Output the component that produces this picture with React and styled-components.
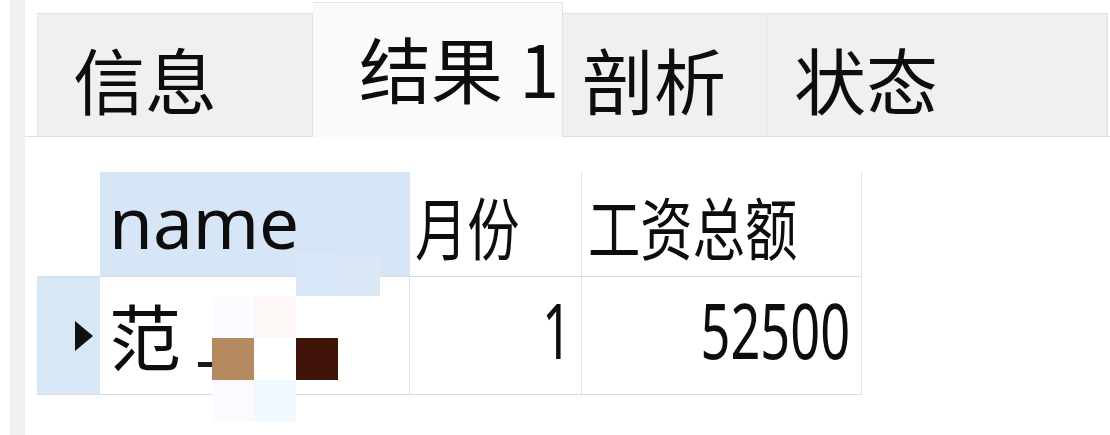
import React from "react";
import styled, { createGlobalStyle } from "styled-components";

const GlobalStyle = createGlobalStyle`
    html, body {
        margin: 0;
        padding: 0;
        background: #ffffff;
    }
    body {
        font-family: "Noto Sans", "Noto Sans CJK SC", sans-serif;
        color: #0d0d0d;
    }
`;

const Page = styled.div`
    display: flex;
    width: 1110px;
    height: 435px;
    overflow: hidden;
    background: #ffffff;
`;

const SideStrip = styled.div`
    flex-shrink: 0;
    width: 15px;
    margin-left: 10px;
    background: #f0f0f0;
`;

const Main = styled.div`
    flex: 1;
    min-width: 0;
    display: flex;
    flex-direction: column;
`;

const TabBar = styled.div`
    display: flex;
    align-items: flex-end;
    height: 137px;
    box-sizing: border-box;
    padding-left: 12px;
    border-bottom: 1px solid #dedede;
`;

const Tab = styled.div`
    position: relative;
    flex-shrink: 0;
    box-sizing: border-box;
    width: ${(p) => p.$width}px;
    height: ${(p) => (p.$active ? 135 : 123)}px;
    margin-bottom: ${(p) => (p.$active ? -1 : 0)}px;
    padding-left: ${(p) => p.$pad}px;
    padding-top: 28px;
    background: ${(p) => (p.$active ? "#fafafa" : "#f0f0f0")};
    border-top: 1px solid #e3e3e3;
    border-right: 1px solid #e3e3e3;
    border-left: ${(p) => (p.$first ? "1px solid #e3e3e3" : "none")};
    z-index: ${(p) => (p.$active ? 1 : 0)};
    font-family: "Noto Sans CJK SC", "Noto Sans", sans-serif;
    font-size: 72px;
    line-height: 1;
    white-space: nowrap;
`;

const Content = styled.div`
    flex: 1;
    padding: 35px 0 0 12px;
`;

const Grid = styled.div`
    position: relative;
    display: grid;
    grid-template-columns: 63px 310px 172px 280px;
    grid-template-rows: 105px 118px;
`;

const Cell = styled.div`
    display: flex;
    box-sizing: border-box;
    align-items: flex-end;
    justify-content: ${(p) => (p.$right ? "flex-end" : "flex-start")};
    padding: ${(p) => p.$pad};
    background: ${(p) => p.$bg || "#ffffff"};
    border-right: 1px solid #e2e2e2;
    border-bottom: 1px solid #dcdcdc;
    overflow: hidden;
`;

const Corner = styled.div`
    box-sizing: border-box;
    border-bottom: 1px solid #dcdcdc;
`;

const Indicator = styled.div`
    display: flex;
    align-items: center;
    justify-content: flex-end;
    box-sizing: border-box;
    padding-right: 7px;
    background: #d7e7f6;
    border-bottom: 1px solid #dcdcdc;
`;

const Arrow = styled.div`
    width: 0;
    height: 0;
    border-left: 18px solid #111111;
    border-top: 15px solid transparent;
    border-bottom: 15px solid transparent;
`;

const LatinText = styled.span`
    font-family: "Noto Sans", sans-serif;
    font-size: 71px;
    line-height: 1;
    white-space: nowrap;
`;

const HanText = styled.span`
    display: inline-block;
    font-family: "Noto Sans CJK SC", sans-serif;
    font-size: ${(p) => p.$size || 68}px;
    line-height: 1;
    white-space: nowrap;
    transform: scaleX(${(p) => p.$scale || 1});
    transform-origin: left bottom;
`;

const Digits = styled.span`
    display: inline-block;
    font-family: "Noto Sans", sans-serif;
    font-size: 77px;
    line-height: 1;
    white-space: nowrap;
    transform: scaleX(0.68);
    transform-origin: right bottom;
`;

const Mosaic = styled.div`
    position: absolute;
    left: 175px;
    top: 82px;
    display: grid;
    grid-template-columns: repeat(4, 42px);
    grid-template-rows: repeat(4, 42px);
    pointer-events: none;
`;

const Block = styled.div`
    background: ${(p) => p.$color || "transparent"};
`;

const Stroke = styled.div`
    position: absolute;
    left: 161px;
    top: 190px;
    width: 14px;
    height: 5px;
    background: #1a1a1a;
`;

const tabs = [
    { label: "信息", width: 276, pad: 35 },
    { label: "结果 1", width: 250, pad: 46, active: true },
    { label: "剖析", width: 204, pad: 19 },
    { label: "状态", width: 341, pad: 27 },
];

const mosaic = [
    [null, null, "#d9e9f9", "#dae8f6"],
    ["#fbfcff", "#fdf7f5", null, null],
    ["#b68a61", "#ffffff", "#401309", null],
    ["#fcfaff", "#f1faff", null, null],
];

const App = () => {
    return (
        <Page>
            <GlobalStyle />
            <SideStrip />
            <Main>
                <TabBar>
                    {tabs.map((t, i) => (
                        <Tab
                            key={t.label}
                            $width={t.width}
                            $pad={t.pad}
                            $active={t.active}
                            $first={i === 0}
                        >
                            {t.label}
                        </Tab>
                    ))}
                </TabBar>
                <Content>
                    <Grid>
                        <Corner />
                        <Cell $bg="#d6e6f6" $pad="0 0 19px 9px">
                            <LatinText>name</LatinText>
                        </Cell>
                        <Cell $pad="0 0 16px 5px">
                            <HanText $scale={0.77}>月份</HanText>
                        </Cell>
                        <Cell $pad="0 0 16px 6px">
                            <HanText $scale={0.77}>工资总额</HanText>
                        </Cell>

                        <Indicator>
                            <Arrow />
                        </Indicator>
                        <Cell $pad="0 0 24px 9px">
                            <HanText $size={72}>范</HanText>
                        </Cell>
                        <Cell $right $pad="0 9px 26px 0">
                            <Digits>1</Digits>
                        </Cell>
                        <Cell $right $pad="0 11px 26px 0">
                            <Digits>52500</Digits>
                        </Cell>

                        <Stroke />
                        <Mosaic>
                            {mosaic.flat().map((c, i) => (
                                <Block key={i} $color={c} />
                            ))}
                        </Mosaic>
                    </Grid>
                </Content>
            </Main>
        </Page>
    );
};

export default App;
